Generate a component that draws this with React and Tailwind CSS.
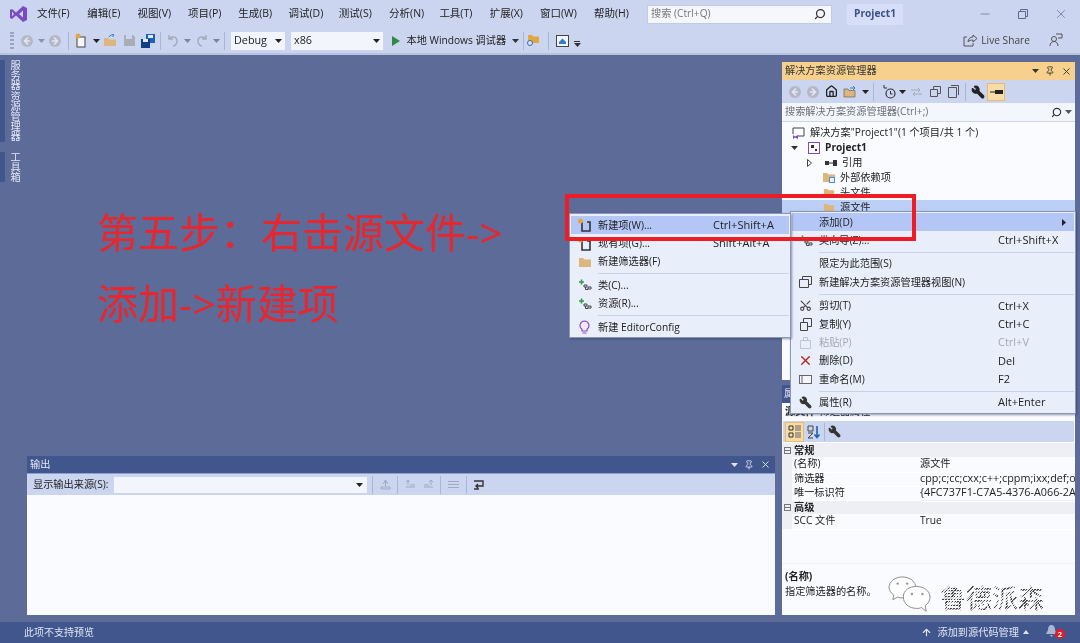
import { Wrench, Home, Pin, X, Minus, Search, Scissors, ArrowUp } from "lucide-react";

const FONT = "[font-family:'Open_Sans','Noto_Sans_CJK_SC',sans-serif]";

const menus = [
  "文件(F)", "编辑(E)", "视图(V)", "项目(P)", "生成(B)", "调试(D)",
  "测试(S)", "分析(N)", "工具(T)", "扩展(X)", "窗口(W)",
];

function Caret({ className = "text-[#333]" }) {
  return (
    <svg width="7" height="4" viewBox="0 0 7 4" className={`shrink-0 ${className}`}>
      <path d="M0 0h7L3.500 4z" fill="currentColor" />
    </svg>
  );
}

function Sep({ className = "" }) {
  return <div className={`w-px h-[18px] bg-[#aab6d6] shrink-0 ${className}`} />;
}

function Circle({ dir, className = "" }) {
  return (
    <svg width="14" height="14" viewBox="0 0 14 14" className={`shrink-0 ${className}`}>
      <circle cx="7" cy="7" r="6" fill="#b4b8c6" />
      <path d={dir === "l" ? "M8 3.500 4.500 7 8 10.500M5 7h5" : "M6 3.500 9.500 7 6 10.500M9 7H4"} stroke="#e4e8f4" strokeWidth="1.600" fill="none" />
    </svg>
  );
}

function Folder({ color = "#dcb67a", className = "", w = 14, h = 12 }) {
  return (
    <svg width={w} height={h} viewBox="0 0 14 12" className={`shrink-0 ${className}`}>
      <path d="M1 2h4l1.500 1.500H13V11H1z" fill={color} />
    </svg>
  );
}

function AddClass() {
  return (
    <svg width="14" height="12" viewBox="0 0 14 12">
      <path d="M1 3h5M3.500 .5v5" stroke="#2f9e44" strokeWidth="1.600" />
      <path d="M6 6h3v2H6zM10 8h3v2h-3zM7.500 8v2.500H10" stroke="#444" strokeWidth="1" fill="none" />
    </svg>
  );
}

function NewItem() {
  return (
    <svg width="15" height="14" viewBox="0 0 15 14">
      <path d="M5 4v9h8V4h-3" fill="none" stroke="#333" strokeWidth="1.600" />
      <circle cx="3.500" cy="3" r="2.500" fill="#e0a83e" />
    </svg>
  );
}

function TreeRow({ indent, children, active }) {
  return (
    <div className={`h-[15px] flex items-center gap-[5px] ${active ? "bg-[#bccff7]" : ""}`} style={{ paddingLeft: indent }}>
      {children}
    </div>
  );
}

function MenuRow({ icon, label, keys, active, disabled, arrow, textLeft, keyLeft }) {
  return (
    <div className={`relative flex items-center h-[18.400px] ${active ? "bg-[#b3c6f6]" : ""} ${disabled ? "text-[#a5a9b5]" : "text-[#222]"}`}>
      <div className="flex justify-center items-center shrink-0" style={{ width: textLeft }}>{icon}</div>
      <div className="shrink-0 whitespace-nowrap" style={{ width: keyLeft - textLeft }}>{label}</div>
      <div className="whitespace-nowrap text-[11px]">{keys}</div>
      {arrow && (
        <svg width="4" height="7" viewBox="0 0 4 7" className="absolute right-[8px] top-[6px]">
          <path d="M0 0l4 3.500L0 7z" fill="#222" />
        </svg>
      )}
    </div>
  );
}

function MenuSep({ left }) {
  return (
    <div className="h-[5px] flex items-center" style={{ paddingLeft: left }}>
      <div className="h-px w-full bg-[#c9d1e6]" />
    </div>
  );
}

function PropRow({ name, value, latin }) {
  return (
    <div className="h-[14.300px] flex items-center">
      <div className="w-[10px] h-full bg-[#eeeff4] shrink-0" />
      <div className="w-[128px] pl-[2px] shrink-0 border-b border-white">{name}</div>
      <div className={`whitespace-nowrap overflow-hidden border-b border-white flex-1 ${latin ? "text-[10.800px]" : ""}`}>{value}</div>
    </div>
  );
}

function PropGroup({ title }) {
  return (
    <div className="h-[14.300px] flex items-center bg-[#eeeff4] font-bold text-[#222]">
      <div className="w-[7px] h-[7px] border border-[#777] ml-[2px] mr-[3px] flex items-center">
        <div className="h-px w-full bg-[#777]" />
      </div>
      {title}
    </div>
  );
}

function RailTab({ label, h }) {
  return (
    <div className="flex" style={{ height: h }}>
      <div className="w-[5px] bg-[#40568d]" />
      <div className="ml-[4px] text-[#e4e9f7] text-[10.200px] leading-[11px] whitespace-nowrap [writing-mode:vertical-rl]">{label}</div>
    </div>
  );
}

export default function App() {
  return (
    <div className={`relative w-[1080px] h-[643px] overflow-hidden flex flex-col bg-[#5d6b99] text-[10.200px] text-[#222] blur-[0.4px] ${FONT}`}>
      {/* title bar */}
      <div className="h-[28px] bg-[#ccd5f0] flex items-center shrink-0">
        <svg width="18" height="18" viewBox="0 0 18 18" className="ml-[10px] mr-[9px] shrink-0">
          <path d="M13 1l4 2v12l-4 2-7-6.500L2 14l-2-1V5l2-1 4 3.500zM13 5.500 9 9l4 3.500zM2 6.500v5L4 9z" fill="#7b4bc4" />
        </svg>
        <div className="flex w-[610px] text-[10.500px] shrink-0">
          {menus.map((m) => (
            <span key={m} className="whitespace-nowrap w-[50.300px] shrink-0">{m}</span>
          ))}
          <span className="whitespace-nowrap ml-[3.700px]">帮助(H)</span>
        </div>
        <div className="w-[185px] h-[19px] bg-[#f6f7fc] border border-[#c2cbe4] flex items-center px-[3px] text-[#777] justify-between shrink-0">
          <span>搜索 (Ctrl+Q)</span>
          <Search size={12} strokeWidth={2.500} className="text-[#333] mr-[2px] -scale-x-100" />
        </div>
        <div className="ml-[15px] w-[56px] h-[21px] bg-[#d6dff7] text-[#3d5289] font-bold flex items-center justify-center shrink-0">Project1</div>
        <div className="ml-auto flex items-center gap-[25px] mr-[12px] text-[#5e6b8c]">
          <Minus size={14} strokeWidth={1.200} />
          <svg width="12" height="12" viewBox="0 0 12 12">
            <path d="M1.500 3.500h7v7h-7zM3.500 3.500v-2h7v7h-2" fill="none" stroke="#5e6b8c" />
          </svg>
          <X size={14} strokeWidth={1.200} />
        </div>
      </div>

      {/* toolbar */}
      <div className="h-[27px] bg-[#ccd5f0] flex items-center shrink-0 border-b-2 border-[#b8c3e2]">
        <div className="ml-[10px] w-[4px] h-[17px] border-l-2 border-r-2 border-dotted border-[#9aa5c4] shrink-0" />
        <Circle dir="l" className="ml-[6px]" />
        <Caret className="ml-[3.500px] text-[#8c93a6]" />
        <Circle dir="r" className="ml-[3.500px]" />
        <Sep className="ml-[6px]" />
        <svg width="14" height="15" viewBox="0 0 14 15" className="ml-[5px] shrink-0">
          <rect x="3" y="4" width="8" height="10" fill="#f5f6fb" stroke="#444" />
          <circle cx="4" cy="3" r="2.500" fill="#e0a83e" />
        </svg>
        <Caret className="ml-[4.500px]" />
        <svg width="14" height="13" viewBox="0 0 14 13" className="ml-[3.500px] shrink-0">
          <path d="M1 4h4l1 1.500h7V12H1z" fill="#dcb67a" />
          <path d="M6 3c1-2 3-2.500 5-2M9 0l2 1-1.500 2" fill="none" stroke="#2f7fd1" />
        </svg>
        <svg width="13" height="13" viewBox="0 0 13 13" className="ml-[5.500px] shrink-0">
          <path d="M1 1h9l2 2v9H1z" fill="#a9adb8" />
          <path d="M3 1h6v4H3z" fill="#ccd5f0" />
        </svg>
        <svg width="15" height="14" viewBox="0 0 15 14" className="ml-[5px] shrink-0">
          <path d="M5 0h9v9H5z" fill="#1c62b8" />
          <path d="M0 5h9v9H0z" fill="#0e3f86" />
          <path d="M2 5h5v3H2zM7 1h5v3H7z" fill="#e4e9f7" />
        </svg>
        <Sep className="ml-[4px]" />
        <svg width="12" height="13" viewBox="0 0 12 13" className="ml-[6px] shrink-0 text-[#a4abbf]">
          <path d="M2 1v4h4M2 5c2-3 8-3 8 2 0 3-2 4.500-4 5" fill="none" stroke="currentColor" strokeWidth="1.500" />
        </svg>
        <Caret className="ml-[5.500px] text-[#7e8599]" />
        <svg width="12" height="13" viewBox="0 0 12 13" className="ml-[4.500px] shrink-0 text-[#a4abbf]">
          <path d="M10 1v4H6M10 5C8 2 2 2 2 7c0 3 2 4.500 4 5" fill="none" stroke="currentColor" strokeWidth="1.500" />
        </svg>
        <Caret className="ml-[5.500px] text-[#7e8599]" />
        <Sep className="ml-[4px]" />
        <div className="ml-[6px] w-[54px] h-[18px] bg-[#f3f5fc] flex items-center justify-between pl-[3px] pr-[3px] text-[10.800px] shrink-0">
          <span>Debug</span>
          <Caret className="text-[#222]" />
        </div>
        <div className="ml-[6px] w-[92px] h-[18px] bg-[#f3f5fc] flex items-center justify-between pl-[3px] pr-[3px] text-[10.800px] shrink-0">
          <span>x86</span>
          <Caret className="text-[#222]" />
        </div>
        <svg width="8" height="10" viewBox="0 0 8 10" className="ml-[9px] shrink-0">
          <path d="M0 0l8 5-8 5z" fill="#2d8a3e" />
        </svg>
        <span className="ml-[6.500px] w-[105px] whitespace-nowrap shrink-0">本地 Windows 调试器</span>
        <Caret />
        <Sep className="ml-[4px]" />
        <svg width="14" height="13" viewBox="0 0 14 13" className="ml-[2px] shrink-0">
          <path d="M2 1h4l1.500 1.500H13V9H2z" fill="#e0a83e" />
          <circle cx="4" cy="9" r="2.500" fill="#dbe6fa" stroke="#2f6fc1" />
        </svg>
        <Sep className="ml-[8px]" />
        <svg width="13" height="12" viewBox="0 0 13 12" className="ml-[7px] shrink-0">
          <rect x=".5" y=".5" width="12" height="11" fill="#f3f5fc" stroke="#444" />
          <path d="M3 7l3.500-3.500L10 7v2H3z" fill="#2f7fd1" />
        </svg>
        <div className="ml-[5px] flex flex-col items-center gap-px mt-[6px]">
          <div className="w-[6px] h-px bg-[#333]" />
          <Caret />
        </div>
        <div className="ml-auto flex items-center mr-[17px] text-[#444]">
          <svg width="14" height="13" viewBox="0 0 14 13">
            <path d="M4 3H1v9h9V9M5 8c0-3 2-5 5-5V1l4 3.500L10 8V6C8 6 6 6.500 5 8z" fill="none" stroke="#555" />
          </svg>
          <span className="ml-[4px] mr-[19px]">Live Share</span>
          <svg width="14" height="14" viewBox="0 0 14 14">
            <circle cx="5" cy="6" r="2.500" fill="none" stroke="#555" />
            <path d="M1 13c0-3 2-4.500 4-4.500S9 10 9 13M7 1h6v4H9" fill="none" stroke="#555" />
          </svg>
        </div>
      </div>

      {/* body */}
      <div className="flex-1 flex min-h-0">
        <div className="w-[27px] shrink-0 pt-[5px] flex flex-col gap-[10px]">
          <RailTab label="服务器资源管理器" h={82} />
          <RailTab label="工具箱" h={30} />
        </div>

        <div className="flex-1 flex flex-col justify-end pb-[7px] min-w-0">
          <div className="h-[159px] flex flex-col">
            <div className="h-[17px] bg-[#40568d] text-[#e4e9f7] flex items-center px-[3px] justify-between shrink-0">
              <span>输出</span>
              <div className="flex items-center gap-[6px]">
                <Caret className="text-[#dfe5f5]" />
                <Pin size={10} className="text-[#dfe5f5]" />
                <X size={11} className="text-[#dfe5f5] mr-[1px]" />
              </div>
            </div>
            <div className="h-[22px] bg-[#ccd5f0] flex items-center border-t border-[#8ea0cf] shrink-0 pl-[6px]">
              <span className="w-[81px] whitespace-nowrap">显示输出来源(S):</span>
              <div className="w-[253px] h-[16px] bg-[#f3f5fc] flex items-center justify-end pr-[4px]">
                <Caret className="text-[#222]" />
              </div>
              <Sep className="ml-[5px]" />
              <div className="w-[24px] flex justify-center">
                <svg width="11" height="11" viewBox="0 0 11 11">
                  <path d="M3 5 5.500 1 8 5M5.500 1v6M1 8h9v2H1z" fill="none" stroke="#a0a9c0" />
                </svg>
              </div>
              <Sep />
              <div className="w-[42px] flex justify-center gap-[9px]">
                <svg width="10" height="9" viewBox="0 0 10 9"><path d="M3 0v5M1 2l2-2 2 2M1 7h9M5 5h5" stroke="#a0a9c0" fill="none" /></svg>
                <svg width="10" height="9" viewBox="0 0 10 9"><path d="M7 0v5M5 2l2-2 2 2M0 7h9M0 5h5" stroke="#a0a9c0" fill="none" /></svg>
              </div>
              <Sep />
              <div className="w-[25px] flex flex-col items-center gap-[2px]">
                <div className="w-[11px] h-px bg-[#a0a9c0]" />
                <div className="w-[11px] h-px bg-[#a0a9c0]" />
                <div className="w-[11px] h-px bg-[#a0a9c0]" />
              </div>
              <Sep />
              <svg width="13" height="12" viewBox="0 0 13 12" className="ml-[6px]">
                <path d="M1 2h9v5H3M5 5 3 7l2 2M1 10h5" fill="none" stroke="#333" strokeWidth="1.400" />
              </svg>
            </div>
            <div className="flex-1 bg-[#f9fbff]" />
          </div>
        </div>

        <div className="w-[293px] ml-[7px] mr-[5px] shrink-0 pt-[7px] pb-[7px] flex flex-col gap-[5px]">
          {/* solution explorer */}
          <div className="h-[318px] bg-[#f9fbff] flex flex-col">
            <div className="h-[18px] bg-[#f6d08c] flex items-center justify-between px-[3px] shrink-0 text-[#333]">
              <span>解决方案资源管理器</span>
              <div className="flex items-center gap-[6px]">
                <Caret />
                <Pin size={10} />
                <X size={11} />
              </div>
            </div>
            <div className="h-[23px] bg-[#ccd5f0] flex items-center pl-[6px] shrink-0">
              <Circle dir="l" />
              <Circle dir="r" className="ml-[4px]" />
              <Home size={13} strokeWidth={2.400} className="text-[#222] ml-[5px] shrink-0" />
              <svg width="14" height="13" viewBox="0 0 14 13" className="ml-[5px] shrink-0">
                <path d="M1 4h4l1 1.500h6V12H1z" fill="#dcb67a" stroke="#555" strokeWidth=".6" />
                <path d="M7 3h5M10 1l2 2-2 2" fill="none" stroke="#2f7fd1" />
              </svg>
              <Caret className="ml-[5px]" />
              <Sep className="ml-[4px]" />
              <svg width="13" height="14" viewBox="0 0 13 14" className="ml-[9px] shrink-0">
                <circle cx="7.500" cy="8.500" r="4.500" fill="none" stroke="#333" strokeWidth="1.200" />
                <path d="M7.500 6v3h2M1 0v3h3" fill="none" stroke="#333" />
              </svg>
              <Caret className="ml-[3px]" />
              <svg width="11" height="10" viewBox="0 0 11 10" className="ml-[5px] shrink-0">
                <path d="M0 3h9M7 1l2 2-2 2M11 7H2M4 5 2 7l2 2" fill="none" stroke="#a4abbf" />
              </svg>
              <svg width="11" height="11" viewBox="0 0 11 11" className="ml-[8px] shrink-0">
                <path d="M.5 3.500h7v7h-7zM3.500 3.500v-3h7v7h-3" fill="#ccd5f0" stroke="#555" />
              </svg>
              <svg width="11" height="13" viewBox="0 0 11 13" className="ml-[7px] shrink-0">
                <path d="M.5 2.500h8v10h-8zM3 .5h7.500V10" fill="none" stroke="#555" />
              </svg>
              <Sep className="ml-[6px]" />
              <Wrench size={14} className="text-[#222] -scale-x-100 ml-[5px] shrink-0" fill="#222" />
              <div className="w-[18px] h-[18px] bg-[#f8dba6] border border-[#e7bb72] flex items-center justify-center ml-[2px] shrink-0">
                <svg width="13" height="4" viewBox="0 0 13 4">
                  <path d="M0 2h5" stroke="#222" />
                  <path d="M5 0h8v4H5z" fill="#222" />
                </svg>
              </div>
            </div>
            <div className="h-[19px] bg-[#f4f6fd] border-b border-[#ccd5f0] flex items-center justify-between px-[3px] text-[#6b6f7a] shrink-0">
              <span>搜索解决方案资源管理器(Ctrl+;)</span>
              <div className="flex items-center gap-[3px]">
                <Search size={11} strokeWidth={2.500} className="text-[#333] -scale-x-100" />
                <Caret className="text-[#555]" />
              </div>
            </div>
            <div className="pt-[3px]">
              <TreeRow indent={10}>
                <svg width="13" height="12" viewBox="0 0 13 12">
                  <path d="M1 1h11v8H6" fill="none" stroke="#444" />
                  <path d="M1 1v6" stroke="#444" />
                  <path d="M1 8l2 1.500L6 8v4l-3-1.500L1 12z" fill="#7b4bc4" />
                </svg>
                <span className="whitespace-nowrap">解决方案"Project1"(1 个项目/共 1 个)</span>
              </TreeRow>
              <TreeRow indent={9}>
                <Caret />
                <svg width="12" height="12" viewBox="0 0 12 12" className="ml-[5px]">
                  <rect x=".5" y=".5" width="11" height="11" fill="#fff" stroke="#7b4bc4" />
                  <path d="M3 3h3v3H3zM7 7h2v2H7z" fill="#333" />
                </svg>
                <span className="font-bold">Project1</span>
              </TreeRow>
              <TreeRow indent={25}>
                <svg width="5" height="8" viewBox="0 0 5 8">
                  <path d="M.5.500l4 3.500-4 3.500z" fill="#fff" stroke="#444" />
                </svg>
                <svg width="12" height="6" viewBox="0 0 12 6" className="ml-[8px]">
                  <path d="M0 1h4v4H0zM8 0h4v6H8z" fill="#333" />
                  <path d="M4 3h4" stroke="#333" />
                </svg>
                <span>引用</span>
              </TreeRow>
              <TreeRow indent={41}>
                <svg width="12" height="12" viewBox="0 0 12 12">
                  <path d="M0 1h4l1.500 1.500H12V10H0z" fill="#dcb67a" />
                  <rect x="6.500" y="5.500" width="5" height="5" fill="#e8f1fb" stroke="#4a90d9" />
                </svg>
                <span>外部依赖项</span>
              </TreeRow>
              <TreeRow indent={41}>
                <Folder w={12} h={11} />
                <span>头文件</span>
              </TreeRow>
              <TreeRow indent={41} active>
                <Folder w={12} h={11} />
                <span>源文件</span>
              </TreeRow>
            </div>
          </div>

          {/* properties */}
          <div className="flex-1 bg-[#f9fbff] flex flex-col min-h-0">
            <div className="h-[18px] bg-[#40568d] text-[#e4e9f7] flex items-center pl-[2px] shrink-0">属性</div>
            <div className="h-[18px] flex items-center pl-[3px] shrink-0">
              <b>源文件</b>
              <span className="ml-[4px]">筛选器属性</span>
            </div>
            <div className="h-[21px] bg-[#ccd5f0] flex items-center pl-[2px] shrink-0 mx-px">
              <div className="w-[19px] h-[20px] bg-[#f8dba6] border border-[#e7bb72] flex items-center justify-center shrink-0">
                <svg width="14" height="13" viewBox="0 0 14 13">
                  <path d="M1 1h4v4H1zM1 8h4v4H1z" fill="none" stroke="#333" />
                  <path d="M7 1h6M7 3h6M7 5h6M7 8h6M7 10h6M7 12h6" stroke="#666" />
                </svg>
              </div>
              <svg width="14" height="14" viewBox="0 0 14 14" className="ml-[3px] shrink-0">
                <path d="M1 1h5v5H1zM1 8h5l-5 5h5" fill="none" stroke="#444" />
                <path d="M10 1v11M7.500 9.500 10 12.500l2.500-3" fill="none" stroke="#1c62b8" strokeWidth="1.600" />
              </svg>
              <Sep className="ml-[3px]" />
              <Wrench size={13} className="text-[#333] -scale-x-100 ml-[3px] shrink-0" fill="#333" />
            </div>
            <div className="flex-1 pt-[1px]">
              <PropGroup title="常规" />
              <PropRow name="(名称)" value="源文件" />
              <PropRow latin name="筛选器" value="cpp;c;cc;cxx;c++;cppm;ixx;def;odl;idl;hpj" />
              <PropRow latin name="唯一标识符" value="{4FC737F1-C7A5-4376-A066-2A32D752A2FF}" />
              <PropGroup title="高级" />
              <PropRow name="SCC 文件" value="True" />
            </div>
            <div className="h-[52px] shrink-0 border-t border-[#f0f1f6] pl-[3px] pt-[5px] leading-[15px]">
              <div className="font-bold">(名称)</div>
              <div>指定筛选器的名称。</div>
            </div>
          </div>
        </div>
      </div>

      {/* status bar */}
      <div className="h-[21px] bg-[#40568d] text-[#dfe5f5] flex items-center pl-[24px] shrink-0 text-[10px]">
        <span>此项不支持预览</span>
        <div className="ml-auto flex items-center mr-[15px] text-[10.200px]">
          <ArrowUp size={11} strokeWidth={2.500} />
          <span className="ml-[6px] mr-[4px]">添加到源代码管理</span>
          <svg width="6" height="4" viewBox="0 0 6 4"><path d="M0 4l3-4 3 4z" fill="currentColor" /></svg>
          <div className="relative ml-[17px] w-[19px] h-[14px]">
            <svg width="11" height="12" viewBox="0 0 11 12"><path d="M5.500 0C8 0 9 2 9 5l2 4H0l2-4c0-3 1-5 3.500-5zM4 10h3l-1.500 2z" fill="#a9b6d8" /></svg>
            <div className="absolute left-[9px] top-[4px] w-[10px] h-[10px] rounded-full bg-[#e51c23] text-white text-[7.500px] font-bold leading-[10px] text-center">2</div>
          </div>
        </div>
      </div>

      {/* context menu */}
      <div className="absolute left-[790px] top-[211px] w-[286px] h-[203px] bg-[#e9eefb] border border-[#8a97b8] shadow-[1px_1px_2px_rgba(40,50,90,.5)] p-px">
        <MenuRow label="添加(D)" active arrow textLeft={27} keyLeft={206} />
        <MenuRow icon={<AddClass />} label="类向导(Z)..." keys="Ctrl+Shift+X" textLeft={27} keyLeft={206} />
        <MenuSep left={27} />
        <MenuRow label="限定为此范围(S)" textLeft={27} keyLeft={206} />
        <MenuRow
          icon={
            <svg width="13" height="12" viewBox="0 0 13 12">
              <path d="M.5 3.500h9v8h-9zM3.500 3.500v-3h9v8h-3" fill="none" stroke="#444" />
            </svg>
          }
          label="新建解决方案资源管理器视图(N)"
          textLeft={27}
          keyLeft={206}
        />
        <MenuSep left={27} />
        <MenuRow icon={<Scissors size={13} className="text-[#444] -rotate-90" />} label="剪切(T)" keys="Ctrl+X" textLeft={27} keyLeft={206} />
        <MenuRow
          icon={
            <svg width="12" height="13" viewBox="0 0 12 13">
              <path d="M.5 4.500h7v8h-7zM3.500 4.500v-4h8v8h-4" fill="none" stroke="#444" />
            </svg>
          }
          label="复制(Y)"
          keys="Ctrl+C"
          textLeft={27}
          keyLeft={206}
        />
        <MenuRow
          disabled
          icon={
            <svg width="11" height="13" viewBox="0 0 11 13">
              <path d="M.5 4.500h10v8H.5zM3.500 4.500v-3h4v3" fill="none" stroke="#c0c5d2" />
            </svg>
          }
          label="粘贴(P)"
          keys="Ctrl+V"
          textLeft={27}
          keyLeft={206}
        />
        <MenuRow icon={<X size={15} strokeWidth={2.200} className="text-[#c1281c]" />} label="删除(D)" keys="Del" textLeft={27} keyLeft={206} />
        <MenuRow
          icon={
            <svg width="13" height="9" viewBox="0 0 13 9">
              <rect x=".5" y=".5" width="12" height="8" fill="#f4f6fd" stroke="#666" />
              <path d="M3 1v7" stroke="#666" />
            </svg>
          }
          label="重命名(M)"
          keys="F2"
          textLeft={27}
          keyLeft={206}
        />
        <MenuSep left={27} />
        <MenuRow icon={<Wrench size={13} className="text-[#333] -scale-x-100" fill="#333" />} label="属性(R)" keys="Alt+Enter" textLeft={27} keyLeft={206} />
      </div>

      {/* submenu */}
      <div className="absolute left-[569px] top-[213px] w-[222px] h-[125px] bg-[#e9eefb] border border-[#8a97b8] shadow-[1px_1px_2px_rgba(40,50,90,.5)] px-px pt-[2px]">
        <MenuRow icon={<NewItem />} label="新建项(W)..." keys="Ctrl+Shift+A" active textLeft={27} keyLeft={142} />
        <MenuRow icon={<NewItem />} label="现有项(G)..." keys="Shift+Alt+A" textLeft={27} keyLeft={142} />
        <MenuRow icon={<Folder />} label="新建筛选器(F)" textLeft={27} keyLeft={142} />
        <MenuSep left={27} />
        <MenuRow icon={<AddClass />} label="类(C)..." textLeft={27} keyLeft={142} />
        <MenuRow icon={<AddClass />} label="资源(R)..." textLeft={27} keyLeft={142} />
        <MenuSep left={27} />
        <MenuRow
          icon={
            <svg width="11" height="14" viewBox="0 0 11 14">
              <path d="M5.500 1a4.500 4.500 0 0 1 2.500 8.200V11H3V9.200A4.500 4.500 0 0 1 5.500 1zM3.500 13h4" fill="#f1e9fb" stroke="#8a52c4" strokeWidth="1.200" />
            </svg>
          }
          label="新建 EditorConfig"
          textLeft={27}
          keyLeft={142}
        />
      </div>

      {/* annotation */}
      <div className="absolute left-[565px] top-[194px] w-[351px] h-[47px] border-[4px] border-[#ee1c25]" />
      <div className="absolute left-[97px] top-[197px] text-[#e8262d] text-[41px] leading-[71px] font-normal whitespace-nowrap">
        <div>第五步：右击源文件-&gt;</div>
        <div>添加-&gt;新建项</div>
      </div>

      {/* watermark */}
      <div className="absolute left-[887px] top-[576px] flex items-center">
        <svg width="46" height="40" viewBox="0 0 46 42">
          <path d="M15 1c8 0 14 5 14 11s-6 11-14 11c-2 0-3 0-5-1l-5 3 1-5C3 18 1 15 1 12 1 6 7 1 15 1z" fill="#fff" stroke="#888" />
          <path d="M30 11c8 0 14 5 14 11 0 4-2 7-5 9l1 6-5-4c-2 1-3 1-5 1-8 0-14-5-14-12s6-11 14-11z" fill="#fff" stroke="#888" />
          <circle cx="10" cy="8" r="1.300" fill="#999" />
          <circle cx="20" cy="8" r="1.300" fill="#999" />
          <circle cx="25" cy="19" r="1.300" fill="#999" />
          <circle cx="36" cy="19" r="1.300" fill="#999" />
        </svg>
        <span className="ml-[7px] mt-[4px] text-[26px] leading-none text-transparent bg-clip-text bg-[repeating-linear-gradient(135deg,#444_0,#444_1px,#e8e8e8_1px,#e8e8e8_2px)]">鲁德派森</span>
      </div>
    </div>
  );
}
